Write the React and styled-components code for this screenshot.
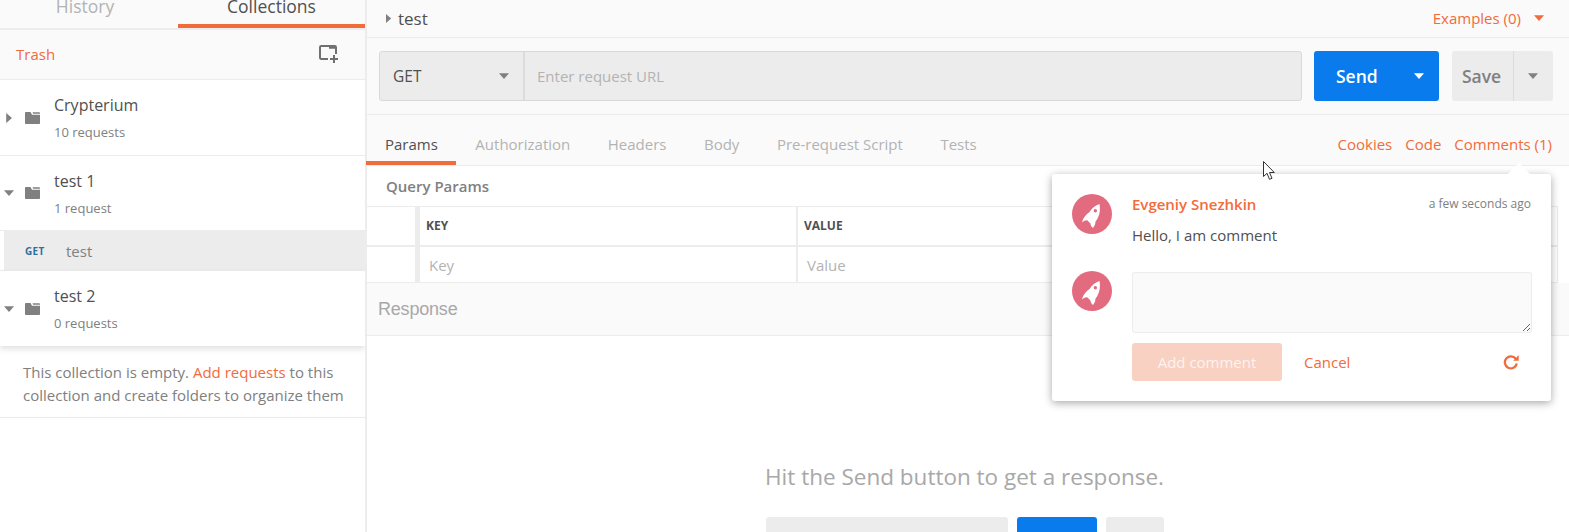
import React from "react";
import styled, { createGlobalStyle } from "styled-components";

const orange = "#f26b3a";

const GlobalStyle = createGlobalStyle`
  html, body {
    margin: 0;
    height: 532px;
    overflow: hidden;
    background: #fff;
  }
  * {
    box-sizing: border-box;
  }
`;

const Page = styled.div`
  display: flex;
  width: 1569px;
  height: 532px;
  overflow: hidden;
  font-family: "Open Sans", "Liberation Sans", sans-serif;
  font-size: 15px;
  color: #505050;
`;

/* sidebar */
const Sidebar = styled.aside`
  width: 365px;
  flex-shrink: 0;
  background: #fff;
`;
const SideTabs = styled.div`
  display: flex;
  height: 30px;
  background: #fafafa;
  border-bottom: 2px solid #ececec;
`;
const SideTab = styled.div`
  flex: 0 0 ${(props) => props.$width}px;
  height: 28px;
  padding-right: ${(props) => (props.$active ? 0 : 8)}px;
  border-bottom: 4px solid ${(props) => (props.$active ? orange : "transparent")};
  color: ${(props) => (props.$active ? "#505050" : "#b3b3b3")};
  font-size: 17.5px;
  line-height: 12px;
  text-align: center;
`;
const TrashBar = styled.div`
  display: flex;
  align-items: center;
  justify-content: space-between;
  height: 50px;
  padding: 0 25px 2px 16px;
  background: #fafafa;
  border-bottom: 1px solid #ececec;
  color: ${orange};
`;
const CollectionRow = styled.div`
  display: flex;
  align-items: center;
  height: ${(props) => props.$height}px;
  border-bottom: ${(props) => (props.$last ? "none" : "1px solid #ececec")};
  box-shadow: ${(props) => (props.$last ? "0 3px 6px rgba(0,0,0,0.12)" : "none")};
  position: relative;
`;
const CaretSlot = styled.div`
  display: flex;
  justify-content: center;
  width: 18px;
`;
const FolderSlot = styled.div`
  display: flex;
  width: 36px;
  padding: 0 0 0 7px;
`;
const CollectionText = styled.div`
  display: flex;
  flex-direction: column;
  align-self: flex-start;
  gap: 8px;
  padding-top: 16px;
`;
const CollectionName = styled.div`
  font-size: 16px;
  line-height: 19px;
`;
const CollectionCount = styled.div`
  font-size: 13px;
  line-height: 18px;
  color: #808080;
`;
const RequestRow = styled.div`
  display: flex;
  align-items: center;
  height: 40px;
  padding-left: 4px;
  background: linear-gradient(to right, #fff 4px, #ececec 4px);
  border-bottom: 1px solid #ececec;
  color: #808080;
  font-size: 15px;
`;
const MethodTag = styled.span`
  width: 62px;
  padding-left: 21px;
  color: #2f6f9f;
  font-size: 10px;
  font-weight: 700;
  letter-spacing: 0.3px;
`;
const EmptyNote = styled.div`
  height: 72px;
  padding: 15px 20px 0 23px;
  border-bottom: 1px solid #ececec;
  color: #808080;
  font-size: 15px;
  line-height: 23px;
`;
const Accent = styled.span`
  color: ${orange};
`;

/* main */
const Main = styled.main`
  position: relative;
  flex: 1;
  min-width: 0;
  background: #fff;
  border-left: 2px solid #ececec;
`;
const Breadcrumb = styled.div`
  display: flex;
  align-items: center;
  justify-content: space-between;
  height: 38px;
  padding: 0 25px 0 17px;
  background: #fafafa;
  border-bottom: 1px solid #ececec;
`;
const BreadcrumbName = styled.div`
  display: flex;
  align-items: center;
  gap: 5px;
  font-size: 17px;
`;
const ExamplesLink = styled.div`
  display: flex;
  align-items: center;
  gap: 13px;
  padding-bottom: 2px;
  color: ${orange};
  font-size: 15px;
`;
const RequestBar = styled.div`
  display: flex;
  align-items: center;
  height: 77px;
  padding: 0 16px 1px 12px;
  background: #fafafa;
  border-bottom: 1px solid #ececec;
`;
const UrlGroup = styled.div`
  display: flex;
  flex-shrink: 0;
  width: 923px;
  height: 50px;
  background: #ececec;
  border: 1px solid #d9d9d9;
  border-radius: 3px;
`;
const MethodSelect = styled.div`
  display: flex;
  align-items: center;
  justify-content: space-between;
  width: 145px;
  padding: 0 14px 0 13px;
  border-right: 2px solid #dcdcdc;
  font-size: 15.5px;
`;
const UrlPlaceholder = styled.div`
  display: flex;
  align-items: center;
  padding-left: 12px;
  color: #b3b3b3;
  font-size: 15px;
`;
const SendButton = styled.div`
  display: flex;
  align-items: center;
  flex-shrink: 0;
  width: 125px;
  height: 50px;
  margin-left: 12px;
  padding: 0 15px 0 22px;
  justify-content: space-between;
  background: #097bed;
  border-radius: 3px;
  color: #fff;
  font-size: 17.5px;
  font-weight: 600;
`;
const SaveButton = styled.div`
  display: flex;
  flex-shrink: 0;
  width: 101px;
  height: 50px;
  margin-left: 13px;
  background: #ececec;
  border-radius: 3px;
  color: #808080;
  font-size: 17.5px;
  font-weight: 600;
`;
const SaveLabel = styled.div`
  display: flex;
  align-items: center;
  justify-content: center;
  width: 62px;
  padding-right: 2px;
  border-right: 1px solid #dcdcdc;
`;
const SaveCaret = styled.div`
  display: flex;
  align-items: center;
  justify-content: center;
  flex: 1;
  padding-right: 2px;
`;
const TabsBar = styled.div`
  display: flex;
  justify-content: space-between;
  height: 51px;
  background: #fafafa;
  border-bottom: 1px solid #ececec;
`;
const TabGroup = styled.div`
  display: flex;
`;
const RequestTab = styled.div`
  display: flex;
  align-items: center;
  height: 50px;
  padding: 12px 18px 0 ${(props) => (props.$first ? 19 : 19.5)}px;
  margin-left: ${(props) => (props.$first ? -1 : 0)}px;
  border-bottom: 4px solid ${(props) => (props.$active ? orange : "transparent")};
  color: ${(props) => (props.$active ? "#505050" : "#b3b3b3")};
  font-size: 15px;
`;
const TabLinks = styled.div`
  display: flex;
  align-items: center;
  gap: 13px;
  padding: 12px 17px 5px 0;
  color: ${orange};
  font-size: 15px;
`;
const SectionTitle = styled.div`
  height: 40px;
  padding: 11px 0 0 19px;
  color: #808080;
  font-size: 15px;
  font-weight: 600;
  line-height: 19px;
`;
const ParamsRow = styled.div`
  display: grid;
  grid-template-columns: 53px 378px 1fr;
  width: 1191px;
  height: ${(props) => props.$height}px;
  border-top: ${(props) => (props.$top ? "1px solid #ececec" : "none")};
  border-bottom: ${(props) => props.$bottom}px solid #ececec;
  border-right: 1px solid #ececec;
`;
const ParamsCell = styled.div`
  display: flex;
  align-items: center;
  padding-left: ${(props) => props.$pad}px;
  padding-bottom: ${(props) => (props.$head ? 2 : 0)}px;
  border-right: ${(props) => props.$line}px solid #ececec;
  color: ${(props) => (props.$head ? "#505050" : "#b3b3b3")};
  font-size: ${(props) => (props.$head ? 12 : 15)}px;
  font-weight: ${(props) => (props.$head ? 700 : 400)};
`;
const ResponseBar = styled.div`
  display: flex;
  align-items: center;
  height: 53px;
  padding: 0 0 0 11px;
  background: #fafafa;
  border-bottom: 1px solid #ececec;
  color: #a8a8a8;
  font-family: "Liberation Sans", Arial, sans-serif;
  font-size: 18px;
  letter-spacing: -0.2px;
`;
const EmptyResponse = styled.div`
  display: flex;
  flex-direction: column;
  align-items: center;
  padding: 126px 0 0 0;
  width: 1195px;
`;
const EmptyTitle = styled.div`
  color: #a8a8a8;
  font-size: 22.5px;
  line-height: 30px;
`;
const GhostBar = styled.div`
  display: flex;
  gap: 9px;
  margin-top: 25px;
`;
const GhostBlock = styled.div`
  width: ${(props) => props.$width}px;
  height: 30px;
  border-radius: 3px;
  background: ${(props) => (props.$primary ? "#097bed" : "#ececec")};
`;

/* comments popover */
const Popover = styled.div`
  position: absolute;
  top: 174px;
  left: 685px;
  width: 499px;
  height: 227px;
  padding: 20px 19px 0 20px;
  background: #fff;
  border-radius: 3px;
  box-shadow: 0 2px 8px rgba(0, 0, 0, 0.35);
  &::before {
    content: "";
    position: absolute;
    top: -11px;
    right: 21px;
    border-left: 11px solid transparent;
    border-right: 11px solid transparent;
    border-bottom: 11px solid #fff;
  }
`;
const CommentRow = styled.div`
  display: flex;
  gap: 20px;
  height: ${(props) => props.$height}px;
`;
const Avatar = styled.div`
  display: flex;
  align-items: center;
  justify-content: center;
  width: 40px;
  height: 40px;
  flex-shrink: 0;
  border-radius: 50%;
  background: #e26b80;
`;
const CommentBody = styled.div`
  flex: 1;
  min-width: 0;
`;
const CommentHead = styled.div`
  display: flex;
  justify-content: space-between;
  height: 31px;
  padding: 1px 1px 0 0;
`;
const Author = styled.div`
  color: ${orange};
  font-size: 15px;
  font-weight: 600;
  line-height: 19px;
`;
const Timestamp = styled.div`
  color: #808080;
  font-size: 12px;
  line-height: 18px;
`;
const CommentText = styled.div`
  font-size: 15px;
  line-height: 21px;
`;
const CommentInput = styled.textarea`
  display: block;
  width: 400px;
  height: 61px;
  margin: 1px 0 0;
  background: #fafafa;
  border: 1px solid #ececec;
  border-radius: 3px;
  outline: none;
`;
const FormActions = styled.div`
  display: flex;
  align-items: center;
  margin-top: 10px;
`;
const AddButton = styled.div`
  display: flex;
  align-items: center;
  justify-content: center;
  width: 150px;
  height: 38px;
  background: #f8d1c3;
  border-radius: 3px;
  color: rgba(255, 255, 255, 0.75);
  font-size: 15px;
`;
const CancelLink = styled.div`
  margin-left: 22px;
  color: ${orange};
  font-size: 15px;
`;
const RefreshSlot = styled.div`
  display: flex;
  margin-left: auto;
  margin-right: 13px;
`;
const Pointer = styled.svg`
  position: absolute;
  top: 160px;
  left: 895px;
`;

const Caret = ({ dir = "down", color = "#808080", size = 10 }) => (
  <svg
    width={size}
    height={size}
    viewBox="0 0 10 10"
    fill={color}
    style={dir === "right" ? { transform: "rotate(-90deg)" } : undefined}
  >
    <path d="M0 2.2h10L5 8z" />
  </svg>
);

const FolderIcon = () => (
  <svg width="15" height="12" viewBox="0 0 15 12" fill="#808080">
    <path d="M0 .8C0 .3.3 0 .8 0h4.700L7 2.800h8v8.400c0 .5-.3.8-.8.8H.8c-.5 0-.8-.3-.8-.8zM7.500.3h6.700c.5 0 .8.3.8.8v.7H8.200z" />
  </svg>
);

const NewCollectionIcon = () => (
  <svg width="22" height="20" viewBox="0 0 22 20" fill="none" stroke="#707070" strokeWidth="2">
    <path d="M10 15H3.200a1.200 1.200 0 0 1-1.200-1.200V3.200A1.200 1.200 0 0 1 3.200 2h13.600A1.200 1.200 0 0 1 18 3.200V10" />
    <path d="M11 3.500h7" strokeWidth="2.500" />
    <path d="M16 11v8M12 15h8" />
  </svg>
);

const RocketIcon = () => (
  <svg width="40" height="40" viewBox="0 0 40 40" fill="#fff">
    <path
      fillRule="evenodd"
      d="M27.500 10C23.500 11.500 20 14 17.500 18L15 20c-2.500 2.500-4.500 5.500-5 8.500 2-1.500 4-2.500 5.500-2l3 3c0 1.500 1 3.500 2.500 4.500 1.500-2 2.500-4 2.500-6.500 3.500-4 5.300-10.500 4-17.500zM23.300 15a1.700 1.700 0 1 0 .1 3.400 1.700 1.700 0 0 0-.1-3.400z"
    />
  </svg>
);

const RefreshIcon = () => (
  <svg width="16" height="16" viewBox="0 0 16 16" fill="none" stroke={orange} strokeWidth="2.300">
    <path d="M13 5.200A6 6 0 1 0 13.800 9.500" />
    <path d="M15.700 1v5.700h-5.500z" fill={orange} stroke="none" />
  </svg>
);

const collections = [
  { name: "Crypterium", count: "10 requests", dir: "right", height: 76 },
  { name: "test 1", count: "1 request", dir: "down", height: 75 },
];

const requestTabs = ["Authorization", "Headers", "Body", "Pre-request Script", "Tests"];

const App = () => (
  <Page>
    <GlobalStyle />
    <Sidebar>
      <SideTabs>
        <SideTab $width={178}>History</SideTab>
        <SideTab $width={187} $active>
          Collections
        </SideTab>
      </SideTabs>
      <TrashBar>
        Trash
        <NewCollectionIcon />
      </TrashBar>
      {collections.map((item) => (
        <CollectionRow key={item.name} $height={item.height}>
          <CaretSlot>
            <Caret dir={item.dir} size={10} />
          </CaretSlot>
          <FolderSlot>
            <FolderIcon />
          </FolderSlot>
          <CollectionText>
            <CollectionName>{item.name}</CollectionName>
            <CollectionCount>{item.count}</CollectionCount>
          </CollectionText>
        </CollectionRow>
      ))}
      <RequestRow>
        <MethodTag>GET</MethodTag>
        test
      </RequestRow>
      <CollectionRow $height={75} $last>
        <CaretSlot>
          <Caret size={10} />
        </CaretSlot>
        <FolderSlot>
          <FolderIcon />
        </FolderSlot>
        <CollectionText>
          <CollectionName>test 2</CollectionName>
          <CollectionCount>0 requests</CollectionCount>
        </CollectionText>
      </CollectionRow>
      <EmptyNote>
        This collection is empty. <Accent>Add requests</Accent> to this collection and create
        folders to organize them
      </EmptyNote>
    </Sidebar>
    <Main>
      <Breadcrumb>
        <BreadcrumbName>
          <Caret dir="right" size={9} />
          test
        </BreadcrumbName>
        <ExamplesLink>
          Examples (0)
          <Caret color={orange} />
        </ExamplesLink>
      </Breadcrumb>
      <RequestBar>
        <UrlGroup>
          <MethodSelect>
            GET
            <Caret />
          </MethodSelect>
          <UrlPlaceholder>Enter request URL</UrlPlaceholder>
        </UrlGroup>
        <SendButton>
          Send
          <Caret color="#fff" />
        </SendButton>
        <SaveButton>
          <SaveLabel>Save</SaveLabel>
          <SaveCaret>
            <Caret />
          </SaveCaret>
        </SaveButton>
      </RequestBar>
      <TabsBar>
        <TabGroup>
          <RequestTab $active $first>
            Params
          </RequestTab>
          {requestTabs.map((tab) => (
            <RequestTab key={tab}>{tab}</RequestTab>
          ))}
        </TabGroup>
        <TabLinks>
          <span>Cookies</span>
          <span>Code</span>
          <span>Comments (1)</span>
        </TabLinks>
      </TabsBar>
      <SectionTitle>Query Params</SectionTitle>
      <ParamsRow $height={41} $top $bottom={2}>
        <ParamsCell $line={5} />
        <ParamsCell $line={2} $pad={6} $head>
          KEY
        </ParamsCell>
        <ParamsCell $pad={6} $head>
          VALUE
        </ParamsCell>
      </ParamsRow>
      <ParamsRow $height={36} $bottom={1}>
        <ParamsCell $line={5} />
        <ParamsCell $line={2} $pad={9}>
          Key
        </ParamsCell>
        <ParamsCell $pad={9}>Value</ParamsCell>
      </ParamsRow>
      <ResponseBar>Response</ResponseBar>
      <EmptyResponse>
        <EmptyTitle>Hit the Send button to get a response.</EmptyTitle>
        <GhostBar>
          <GhostBlock $width={242} />
          <GhostBlock $width={80} $primary />
          <GhostBlock $width={58} />
        </GhostBar>
      </EmptyResponse>
      <Popover>
        <CommentRow $height={77}>
          <Avatar>
            <RocketIcon />
          </Avatar>
          <CommentBody>
            <CommentHead>
              <Author>Evgeniy Snezhkin</Author>
              <Timestamp>a few seconds ago</Timestamp>
            </CommentHead>
            <CommentText>Hello, I am comment</CommentText>
          </CommentBody>
        </CommentRow>
        <CommentRow $height={120}>
          <Avatar>
            <RocketIcon />
          </Avatar>
          <CommentBody>
            <CommentInput />
            <FormActions>
              <AddButton>Add comment</AddButton>
              <CancelLink>Cancel</CancelLink>
              <RefreshSlot>
                <RefreshIcon />
              </RefreshSlot>
            </FormActions>
          </CommentBody>
        </CommentRow>
      </Popover>
      <Pointer width="14" height="21" viewBox="0 0 14 21">
        <path
          d="M1.500 1.500v15l3.500-3.200 2.500 6 2.500-1-2.500-5.800h4.800z"
          fill="#fff"
          stroke="#333"
          strokeWidth="1"
        />
      </Pointer>
    </Main>
  </Page>
);

export default App;
